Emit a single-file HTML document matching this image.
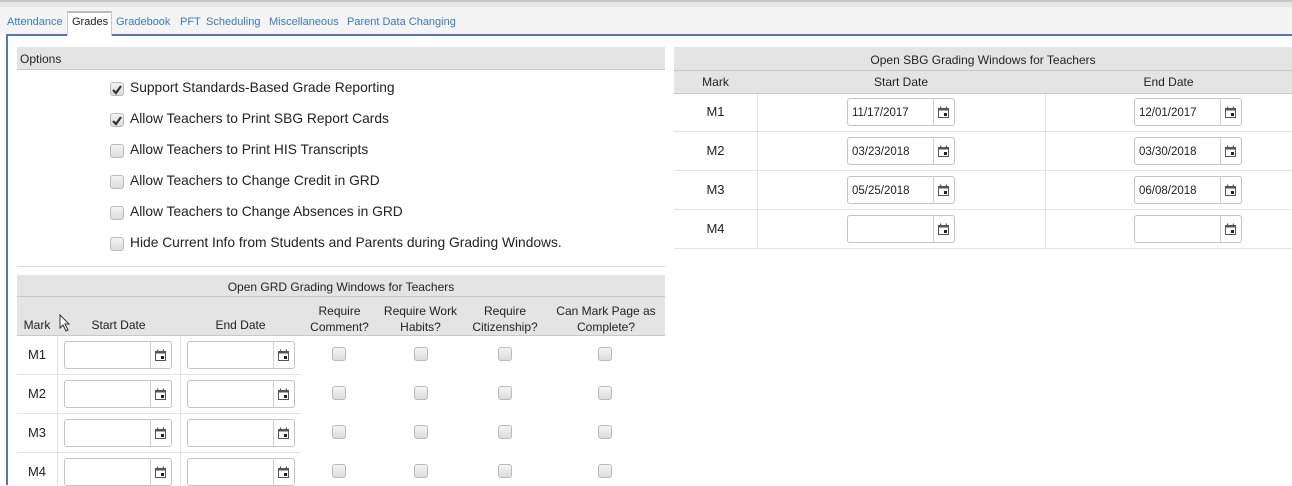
<!DOCTYPE html>
<html><head><meta charset="utf-8"><style>
body{margin:0;width:1292px;height:485px;background:#fff;font-family:"Liberation Sans",sans-serif;position:relative;overflow:hidden;color:#222}
div{position:absolute;box-sizing:border-box}
.t{font-size:11px;color:#3a78c0;top:16px;white-space:nowrap}
.hd{background:#e4e4e4;border-bottom:1px solid #c8c8c8;font-size:12px;color:#222}
.in{width:108px;height:28px;border:1px solid #c4c4c4;border-radius:3px;background:#fff;font-size:11.5px;padding:8px 0 0 4px;color:#222}
.in .b{left:85px;top:-1px;width:1px;height:28px;background:#d0d0d0}
.in svg{position:absolute;left:89px;top:7px}
.cb{width:14px;height:14px;border:1px solid #bbb;border-radius:3px;background:linear-gradient(#f4f4f4,#dcdcdc)}
.op{font-size:13.8px;left:130px;white-space:nowrap}
.hl{height:1px;background:#e3e3e3}
.vl{width:1px;background:#e3e3e3}
.c{text-align:center;font-size:12px}
</style></head><body>
<div style="left:0;top:0;width:1292px;height:2px;background:#c8c8c8"></div>
<div style="left:0;top:2px;width:1292px;height:5px;background:#e6e6e6"></div>
<div style="left:0;top:7px;width:1292px;height:27px;background:#f4f4f4"></div>
<div style="left:6px;top:34px;width:1286px;height:2px;background:#4a7ab8"></div>
<div style="left:6px;top:34px;width:2px;height:451px;background:#4a7ab8"></div>
<div style="left:67px;top:11px;width:45px;height:25px;background:#fff;border:1px solid #ccc;border-top:2px solid #bbb;border-bottom:none"></div>
<div class="t" style="left:7px">Attendance</div>
<div class="t" style="left:72px;color:#222">Grades</div>
<div class="t" style="left:116px">Gradebook</div>
<div class="t" style="left:180px">PFT</div>
<div class="t" style="left:206px">Scheduling</div>
<div class="t" style="left:269px">Miscellaneous</div>
<div class="t" style="left:347px">Parent Data Changing</div>

<!-- Options -->
<div class="hd" style="left:17px;top:47px;width:648px;height:23px;padding:5px 0 0 3px">Options</div>
<div class="cb" style="left:110px;top:82px"><svg width="12" height="12" style="position:absolute;left:0;top:0"><path d="M2 7l3 3 5-7" stroke="#333" stroke-width="2.2" fill="none"/></svg></div>
<div class="op" style="top:80px">Support Standards-Based Grade Reporting</div>
<div class="cb" style="left:110px;top:113px"><svg width="12" height="12" style="position:absolute;left:0;top:0"><path d="M2 7l3 3 5-7" stroke="#333" stroke-width="2.2" fill="none"/></svg></div>
<div class="op" style="top:111px">Allow Teachers to Print SBG Report Cards</div>
<div class="cb" style="left:110px;top:144px"></div><div class="op" style="top:142px">Allow Teachers to Print HIS Transcripts</div>
<div class="cb" style="left:110px;top:175px"></div><div class="op" style="top:173px">Allow Teachers to Change Credit in GRD</div>
<div class="cb" style="left:110px;top:206px"></div><div class="op" style="top:204px">Allow Teachers to Change Absences in GRD</div>
<div class="cb" style="left:110px;top:237px"></div><div class="op" style="top:235px">Hide Current Info from Students and Parents during Grading Windows.</div>
<div class="hl" style="left:17px;top:266px;width:648px;background:#d8d8d8"></div>

<!-- GRD -->
<div class="hd c" style="left:17px;top:275px;width:648px;height:22px;padding-top:5px">Open GRD Grading Windows for Teachers</div>
<div style="left:17px;top:297px;width:648px;height:39px;background:#e4e4e4;border-bottom:1px solid #c8c8c8"></div>
<div class="c" style="left:17px;top:318px;width:40px">Mark</div>
<div class="c" style="left:57px;top:318px;width:123px">Start Date</div>
<div class="c" style="left:180px;top:318px;width:121px">End Date</div>
<div class="c" style="left:301px;top:303px;width:77px;line-height:16px">Require<br>Comment?</div>
<div class="c" style="left:378px;top:303px;width:85px;line-height:16px">Require Work<br>Habits?</div>
<div class="c" style="left:463px;top:303px;width:84px;line-height:16px">Require<br>Citizenship?</div>
<div class="c" style="left:547px;top:303px;width:118px;line-height:16px">Can Mark Page as<br>Complete?</div>
<div class="vl" style="left:57px;top:336px;height:149px"></div>
<div class="vl" style="left:180px;top:336px;height:149px"></div>
<div class="hl" style="left:17px;top:374px;width:284px"></div>
<div class="hl" style="left:17px;top:413px;width:284px"></div>
<div class="hl" style="left:17px;top:452px;width:284px"></div>

<div class="c" style="left:17px;top:347px;width:40px;font-size:13px">M1</div>
<div class="c" style="left:17px;top:386px;width:40px;font-size:13px">M2</div>
<div class="c" style="left:17px;top:425px;width:40px;font-size:13px">M3</div>
<div class="c" style="left:17px;top:464px;width:40px;font-size:13px">M4</div>

<svg width="0" height="0" style="position:absolute"><defs><g id="cal"><rect x="1.5" y="2.5" width="10" height="9" fill="#fff" stroke="#555" stroke-width="1"/><rect x="1.5" y="2.5" width="10" height="2" fill="#555"/><rect x="3" y="0.5" width="1.2" height="3" fill="#555"/><rect x="8.8" y="0.5" width="1.2" height="3" fill="#555"/><rect x="7" y="7" width="3" height="3" fill="#222"/></g></defs></svg>

<div class="in" style="left:64px;top:341px"><div class="b"></div><svg width="13" height="13"><use href="#cal"/></svg></div>
<div class="in" style="left:187px;top:341px"><div class="b"></div><svg width="13" height="13"><use href="#cal"/></svg></div>
<div class="in" style="left:64px;top:380px"><div class="b"></div><svg width="13" height="13"><use href="#cal"/></svg></div>
<div class="in" style="left:187px;top:380px"><div class="b"></div><svg width="13" height="13"><use href="#cal"/></svg></div>
<div class="in" style="left:64px;top:419px"><div class="b"></div><svg width="13" height="13"><use href="#cal"/></svg></div>
<div class="in" style="left:187px;top:419px"><div class="b"></div><svg width="13" height="13"><use href="#cal"/></svg></div>
<div class="in" style="left:64px;top:458px"><div class="b"></div><svg width="13" height="13"><use href="#cal"/></svg></div>
<div class="in" style="left:187px;top:458px"><div class="b"></div><svg width="13" height="13"><use href="#cal"/></svg></div>

<div class="cb" style="left:332px;top:347px"></div><div class="cb" style="left:414px;top:347px"></div><div class="cb" style="left:498px;top:347px"></div><div class="cb" style="left:598px;top:347px"></div>
<div class="cb" style="left:332px;top:386px"></div><div class="cb" style="left:414px;top:386px"></div><div class="cb" style="left:498px;top:386px"></div><div class="cb" style="left:598px;top:386px"></div>
<div class="cb" style="left:332px;top:425px"></div><div class="cb" style="left:414px;top:425px"></div><div class="cb" style="left:498px;top:425px"></div><div class="cb" style="left:598px;top:425px"></div>
<div class="cb" style="left:332px;top:464px"></div><div class="cb" style="left:414px;top:464px"></div><div class="cb" style="left:498px;top:464px"></div><div class="cb" style="left:598px;top:464px"></div>

<svg style="position:absolute;left:59px;top:314px" width="12" height="18"><path d="M1 1v13l3-3 3 6 2-1-3-6h4z" fill="#fff" stroke="#333" stroke-width="1"/></svg>

<!-- SBG -->
<div class="hd c" style="left:674px;top:47px;width:618px;height:24px;padding-top:6px">Open SBG Grading Windows for Teachers</div>
<div style="left:674px;top:71px;width:618px;height:23px;background:#e4e4e4;border-bottom:1px solid #c8c8c8"></div>
<div class="c" style="left:674px;top:75px;width:83px">Mark</div>
<div class="c" style="left:757px;top:75px;width:288px">Start Date</div>
<div class="c" style="left:1045px;top:75px;width:247px">End Date</div>
<div class="vl" style="left:757px;top:94px;height:154px"></div>
<div class="vl" style="left:1045px;top:94px;height:154px"></div>
<div class="hl" style="left:674px;top:131px;width:618px"></div>
<div class="hl" style="left:674px;top:170px;width:618px"></div>
<div class="hl" style="left:674px;top:209px;width:618px"></div>
<div class="hl" style="left:674px;top:248px;width:618px"></div>
<div class="c" style="left:674px;top:104px;width:83px;font-size:13px">M1</div>
<div class="c" style="left:674px;top:143px;width:83px;font-size:13px">M2</div>
<div class="c" style="left:674px;top:182px;width:83px;font-size:13px">M3</div>
<div class="c" style="left:674px;top:221px;width:83px;font-size:13px">M4</div>
<div class="in" style="left:847px;top:98px">11/17/2017<div class="b"></div><svg width="13" height="13"><use href="#cal"/></svg></div>
<div class="in" style="left:1134px;top:98px">12/01/2017<div class="b"></div><svg width="13" height="13"><use href="#cal"/></svg></div>
<div class="in" style="left:847px;top:137px">03/23/2018<div class="b"></div><svg width="13" height="13"><use href="#cal"/></svg></div>
<div class="in" style="left:1134px;top:137px">03/30/2018<div class="b"></div><svg width="13" height="13"><use href="#cal"/></svg></div>
<div class="in" style="left:847px;top:176px">05/25/2018<div class="b"></div><svg width="13" height="13"><use href="#cal"/></svg></div>
<div class="in" style="left:1134px;top:176px">06/08/2018<div class="b"></div><svg width="13" height="13"><use href="#cal"/></svg></div>
<div class="in" style="left:847px;top:215px"><div class="b"></div><svg width="13" height="13"><use href="#cal"/></svg></div>
<div class="in" style="left:1134px;top:215px"><div class="b"></div><svg width="13" height="13"><use href="#cal"/></svg></div>
</body></html>
